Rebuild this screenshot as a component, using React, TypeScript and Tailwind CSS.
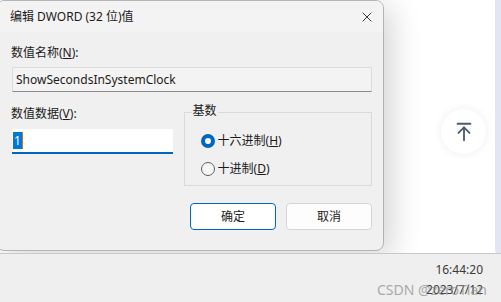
import React from 'react';
import { ArrowUpToLine, X } from 'lucide-react';

const font = { fontFamily: '"Noto Sans", "Noto Sans CJK SC", sans-serif' };

const Radio = ({ checked, label, hot }: { checked?: boolean; label: string; hot: string }) => (
  <div className="flex items-center gap-[3px] h-[16px]">
    {checked ? (
      <span className="w-[14px] h-[14px] rounded-full bg-[#0067c0] flex items-center justify-center">
        <span className="w-[6px] h-[6px] rounded-full bg-white" />
      </span>
    ) : (
      <span className="w-[14px] h-[14px] rounded-full border border-[#5d5d5d] bg-[#f7f7f7]" />
    )}
    <span className="text-[12px] text-[#1b1b1b]">
      {label}(<u>{hot}</u>)
    </span>
  </div>
);

export default function App() {
  return (
    <div className="w-[501px] h-[302px] overflow-hidden bg-white flex flex-col" style={font}>
      <div className="h-[253px] flex">
        <div className="w-[388px] ml-[-4px] h-[251px] rounded-[8px] border border-[#b4b4b4] bg-[#f0f0f0] shadow-[8px_6px_30px_rgba(0,0,0,0.17)] flex flex-col overflow-hidden">
          <div className="h-[31px] bg-[#f3f3f3] flex items-center justify-between pl-[13px] pr-[8px]">
            <span className="text-[12px] text-[#1b1b1b]">编辑 DWORD (32 位)值</span>
            <X size={16} strokeWidth={1.3} className="text-[#1b1b1b]" />
          </div>
          <div className="flex flex-col pl-[15px] pr-[11px]">
            <span className="mt-[13px] text-[12px] text-[#1b1b1b] leading-[16px] ml-[-1px]">
              数值名称(<u>N</u>):
            </span>
            <div className="mt-[6px] h-[25px] border border-[#dcdcdc] border-b-[#8a8a8a] bg-[#f3f3f3] flex items-center px-[3px] text-[12px] text-[#1b1b1b]">
              ShowSecondsInSystemClock
            </div>
            <div className="flex mt-[13px] gap-[11px]">
              <div className="flex flex-col w-[161px]">
                <span className="mt-[1px] text-[12px] text-[#1b1b1b] leading-[16px] ml-[-1px]">
                  数值数据(<u>V</u>):
                </span>
                <div className="mt-[7px] h-[25px] bg-white border-b-2 border-[#0067c0] flex items-center px-[1px] text-[12px]">
                  <span className="bg-[#0078d4] text-white leading-[17px] px-[1px]">1</span>
                  <span className="w-[1px] h-[17px] bg-[#e07000]" />
                </div>
              </div>
              <div className="relative w-[189px] h-[74px] border border-[#dadada] mt-[7px] flex flex-col pl-[16px] pt-[20px] gap-[12px]">
                <span className="absolute top-[-10px] left-[7px] bg-[#f0f0f0] px-[1px] text-[12px] text-[#1b1b1b] leading-[16px]">基数</span>
                <Radio checked label="十六进制" hot="H" />
                <Radio label="十进制" hot="D" />
              </div>
            </div>
            <div className="flex justify-end gap-[10px] mt-[17px]">
              <button className="w-[86px] h-[27px] rounded-[4px] bg-white border border-[#0067c0] text-[12px] text-[#1b1b1b]">
                确定
              </button>
              <button className="w-[86px] h-[27px] rounded-[4px] bg-[#fdfdfd] border border-[#d5d5d5] text-[12px] text-[#1b1b1b]">
                取消
              </button>
            </div>
          </div>
        </div>
        <div className="flex-1 flex items-center justify-end pr-[9px]">
          <div className="w-[45px] h-[45px] rounded-full bg-white shadow-[0_0_10px_rgba(0,0,0,0.07)] flex items-center justify-center mt-[10px]">
            <ArrowUpToLine size={22} strokeWidth={2} className="text-[#4e5969]" />
          </div>
        </div>
        <div className="w-[6px] bg-[#e1e5f4] rounded-bl-[3px]" />
      </div>
      <div className="h-[1px] bg-[#c8c8c8]" />
      <div className="flex-1 bg-[#efefef] relative flex flex-col items-end pr-[18px] pt-[6px] text-[12px] text-[#3b3b3b] leading-[20px]">
        <span>16:44:20</span>
        <span>2023/7/12</span>
        <span className="absolute right-[14px] bottom-[2px] text-[14px] text-[#8c8c8c] opacity-70">CSDN @zeroTian</span>
      </div>
    </div>
  );
}
